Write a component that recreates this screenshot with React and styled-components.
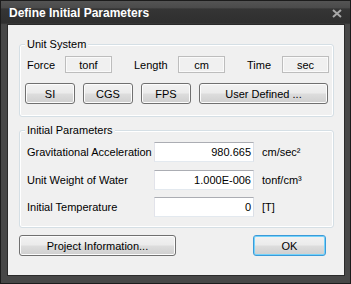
import styled, { createGlobalStyle } from "styled-components";

const GlobalStyle = createGlobalStyle`
  html, body {
    margin: 0;
    padding: 0;
    background: #2b2b2b;
  }
  * {
    box-sizing: border-box;
  }
`;

const Window = styled.div`
  width: 351px;
  height: 284px;
  display: flex;
  flex-direction: column;
  background: #474747;
  border: 1px solid #1c1c1c;
  font-family: "Liberation Sans", Arial, sans-serif;
  font-size: 11px;
  color: #000;
`;

const TitleBar = styled.div`
  height: 24px;
  flex: none;
  display: flex;
  align-items: center;
  justify-content: space-between;
  padding: 0 8px 1px 8px;
  background: linear-gradient(#545454 0, #4a4a4a 30%, #353535 32%, #2f2f2f 92%, #4e4e4e 100%);
`;

const Title = styled.span`
  color: #fff;
  font-weight: bold;
  font-size: 12px;
  letter-spacing: 0;
`;

const Close = styled.svg`
  width: 10px;
  height: 9px;
  margin-top: 1px;
`;

const Client = styled.div`
  flex: 1;
  margin: 0 6px 8px 7px;
  background: #f0f0f0;
  box-shadow: 0 0 0 1px #2a2a2a;
  display: flex;
  flex-direction: column;
  padding: 19px 10px 0 11px;
`;

const Group = styled.div`
  position: relative;
  height: ${(p) => p.$h}px;
  margin-top: ${(p) => p.$mt || 0}px;
  border: 1px solid #d5dfe5;
  border-radius: 3px;
  box-shadow: inset 0 0 0 1px #fff;
  padding: 11px 0 0 7px;
  display: flex;
  flex-direction: column;
`;

const Legend = styled.span`
  position: absolute;
  top: -8px;
  left: 5px;
  padding: 0 2px;
  background: #f0f0f0;
  line-height: 14px;
`;

const UnitRow = styled.div`
  display: flex;
  align-items: center;
  height: 17px;
`;

const Label = styled.span`
  width: ${(p) => p.$w}px;
  flex: none;
  white-space: nowrap;
`;

const ReadBox = styled.div`
  width: 47px;
  height: 17px;
  flex: none;
  margin-right: ${(p) => p.$mr || 0}px;
  border: 1px solid #bdbdbd;
  background: #f0f0f0;
  box-shadow: inset 0 0 0 1px #fafafa;
  display: flex;
  align-items: center;
  justify-content: center;
`;

const ButtonRow = styled.div`
  display: flex;
  gap: 8px;
  margin: 10px 0 0 -2px;
`;

const Button = styled.button`
  width: ${(p) => p.$w}px;
  height: 21px;
  padding: 0;
  font-family: inherit;
  font-size: 11px;
  color: #000;
  border-radius: 3px;
  border: 1px solid ${(p) => (p.$default ? "#3c9ad8" : "#707070")};
  background: linear-gradient(#f2f2f2 0%, #ebebeb 48%, #dddddd 52%, #cfcfcf 100%);
  box-shadow: inset 0 0 0 1px ${(p) => (p.$default ? "#74d3fb" : "#fcfcfc")};
`;

const ParamRows = styled.div`
  display: flex;
  flex-direction: column;
  gap: 7.5px;
`;

const ParamRow = styled.div`
  display: flex;
  align-items: center;
  height: 20px;
`;

const Input = styled.div`
  width: 100px;
  height: 20px;
  flex: none;
  background: #fff;
  border: 1px solid;
  border-color: #abadb3 #dbdfe6 #e3e9ef #e2e3ea;
  display: flex;
  align-items: center;
  justify-content: flex-end;
  padding-right: 2px;
`;

const Unit = styled.span`
  margin-left: 8px;
  white-space: nowrap;
`;

const Footer = styled.div`
  display: flex;
  justify-content: space-between;
  margin-top: 7px;
  padding-right: 8px;
`;

const params = [
  { label: "Gravitational Acceleration", value: "980.665", unit: "cm/sec²" },
  { label: "Unit Weight of Water", value: "1.000E-006", unit: "tonf/cm³" },
  { label: "Initial Temperature", value: "0", unit: "[T]" },
];

export default function App() {
  return (
    <>
      <GlobalStyle />
      <Window>
        <TitleBar>
          <Title>Define Initial Parameters</Title>
          <Close viewBox="0 0 10 9">
            <path d="M1 1 L9 8 M9 1 L1 8" stroke="#a8a8a8" strokeWidth="2" />
          </Close>
        </TitleBar>
        <Client>
          <Group $h={73}>
            <Legend>Unit System</Legend>
            <UnitRow>
              <Label $w={38}>Force</Label>
              <ReadBox $mr={22}>tonf</ReadBox>
              <Label $w={44}>Length</Label>
              <ReadBox $mr={22}>cm</ReadBox>
              <Label $w={35}>Time</Label>
              <ReadBox>sec</ReadBox>
            </UnitRow>
            <ButtonRow>
              <Button $w={50}>SI</Button>
              <Button $w={50}>CGS</Button>
              <Button $w={50}>FPS</Button>
              <Button $w={129}>User Defined ...</Button>
            </ButtonRow>
          </Group>
          <Group $h={98} $mt={13}>
            <Legend>Initial Parameters</Legend>
            <ParamRows>
              {params.map((p) => (
                <ParamRow key={p.label}>
                  <Label $w={127}>{p.label}</Label>
                  <Input>{p.value}</Input>
                  <Unit>{p.unit}</Unit>
                </ParamRow>
              ))}
            </ParamRows>
          </Group>
          <Footer>
            <Button $w={157}>Project Information...</Button>
            <Button $w={73} $default>
              OK
            </Button>
          </Footer>
        </Client>
      </Window>
    </>
  );
}
